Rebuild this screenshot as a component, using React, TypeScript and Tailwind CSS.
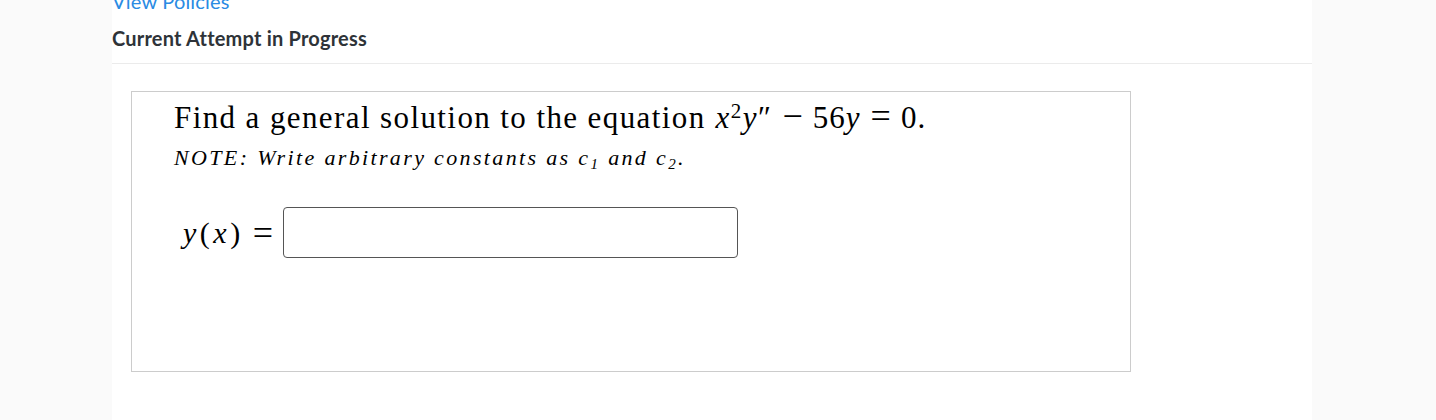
import React from "react";

const serif = { fontFamily: '"Liberation Serif", "DejaVu Serif", serif' };

function V({ children }: { children: React.ReactNode }) {
  return <span className="italic">{children}</span>;
}

export default function App() {
  return (
    <div className="flex h-[420px] w-[1436px] overflow-hidden bg-[#fafafa]">
      <div className="w-[112px] shrink-0" />
      <div className="w-[1200px] shrink-0 bg-white" style={{ fontFamily: 'Lato, "Open Sans", sans-serif' }}>
        <div className="border-b border-[#ebebeb] pb-[11px]">
          <a className="mt-[-11px] block text-[20px] leading-[24px] tracking-[0.2px] text-[#2a8be3]">View Policies</a>
          <h2 className="mt-[11px] text-[20px] font-bold leading-[28px] tracking-[0.2px] text-[#2e3338]">Current Attempt in Progress</h2>
        </div>
        <div className="ml-[19px] mt-[27px] h-[281px] w-[1000px] border border-[#cccccc] pl-[42px] pt-[6px] text-black" style={serif}>
          <div className="whitespace-nowrap text-[31px] leading-[40px]">
            <span className="tracking-[1.4px]">Find a general solution to the equation</span>
            <span className="ml-[10px] tracking-[1.5px]">
              <V>x</V>
              <sup className="text-[21px]">2</sup>
              <V>y</V>″
            </span>
            <span className="mx-[10px] text-[36px] leading-none">−</span>
            <span className="tracking-[1px]">
              56<V>y</V>
            </span>
            <span className="mx-[10px] text-[36px] leading-none">=</span>
            <span className="tracking-[1px]">0.</span>
          </div>
          <div className="mt-[6px] whitespace-nowrap text-[22px] italic leading-[28px] tracking-[2.35px]">
            NOTE: Write arbitrary constants as c<sub className="text-[15px]">1</sub> and c<sub className="text-[15px]">2</sub>.
          </div>
          <div className="mt-[35px] flex items-center pl-[9px]">
            <span className="text-[30px] leading-[40px] tracking-[3.5px]">
              <V>y</V>(<V>x</V>)
            </span>
            <span className="ml-[9px] text-[36px] leading-[40px]">=</span>
            <div className="ml-[10px] h-[51px] w-[455px] rounded-[4px] border-[1.5px] border-[#555]" />
          </div>
        </div>
      </div>
      <div className="flex-1" />
    </div>
  );
}
